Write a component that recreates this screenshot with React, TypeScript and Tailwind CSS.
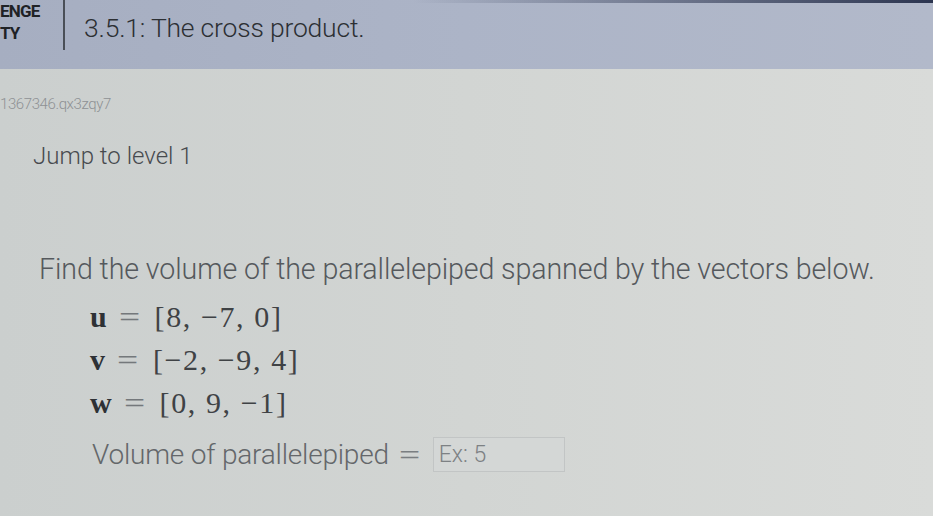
import React from 'react'

function MathLine({ name, values }: { name: string; values: string }) {
  return (
    <div className="flex items-baseline text-[30px] leading-[43px] text-[#3f4245] [font-family:'Liberation_Serif','DejaVu_Serif',serif]">
      <span className="font-bold text-[#2e3135]">{name}</span>
      <span className="ml-[14px] mr-[17px] scale-x-125 text-[#74787b]">=</span>
      <span className="tracking-[1.6px]">{values}</span>
    </div>
  )
}

export default function App() {
  return (
    <div className="flex h-[516px] w-[933px] flex-col overflow-hidden bg-linear-to-r from-[#cbcfce] via-[#d2d5d3] to-[#d9dbd9] [font-family:Roboto,'Liberation_Sans',sans-serif]">
      <header className="relative flex h-[69px] shrink-0 bg-linear-to-r from-[#a6aec1] via-[#acb4c7] to-[#b2b9ca]">
        <div className="absolute right-0 top-0 h-[3px] w-[520px] bg-linear-to-r from-transparent to-[#2c3550]" />
        <div className="flex w-[63px] flex-col pt-[0px] text-[17px] font-bold leading-[22px] tracking-[-0.8px] text-[#1f2226]">
          <span>ENGE</span>
          <span>TY</span>
        </div>
        <div className="h-[50px] w-[2px] bg-[#4a4f57]" />
        <h1 className="ml-[19px] pt-[8px] text-[26.5px] font-light tracking-[-0.2px] text-[#2c2f33]">
          3.5.1: The cross product.
        </h1>
      </header>

      <main className="flex flex-col">
        <p className="mt-[24px] text-[15px] font-light tracking-[-0.4px] text-[#8e9194]">1367346.qx3zqy7</p>
        <p className="ml-[33px] mt-[22px] text-[24px] font-light text-[#474a4e]">Jump to level 1</p>

        <p className="ml-[39px] mt-[74px] text-[28.6px] font-light tracking-[-0.1px] text-[#55595d]">
          Find the volume of the parallelepiped spanned by the vectors below.
        </p>
        <div className="ml-[90px] mt-[5px] flex flex-col">
          <MathLine name="u" values="[8, −7, 0]" />
          <MathLine name="v" values="[−2, −9, 4]" />
          <MathLine name="w" values="[0, 9, −1]" />
        </div>
        <div className="ml-[92px] mt-[8px] flex items-center text-[28px] font-light text-[#64676a]">
          <span className="tracking-[-0.2px]">Volume of parallelepiped</span>
          <span className="ml-[12px] mr-[15px] scale-x-125 text-[30px] text-[#7a7e81] [font-family:'Liberation_Serif',serif]">=</span>
          <div className="flex h-[35px] w-[132px] items-center border border-[#c2c5c5] bg-[#d4d7d6] pl-[5px] text-[23px] text-[#7d8184]">
            Ex: 5
          </div>
        </div>
      </main>
    </div>
  )
}
